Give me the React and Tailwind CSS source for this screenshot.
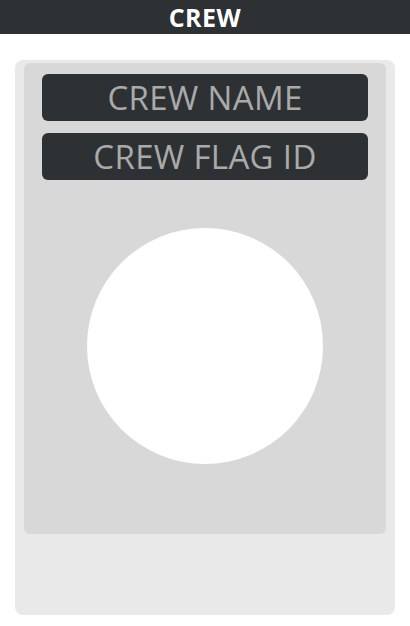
import React from 'react';

const App = () => {
  return (
    <div className="w-[410px] h-[626px] bg-white" style={{ fontFamily: '"Open Sans", sans-serif' }}>
      <div className="h-[34px] bg-[#2d3133] flex items-center justify-center">
        <h1 className="text-white text-[25px] font-bold leading-none tracking-[0.02em]">CREW</h1>
      </div>

      <div className="mx-[15px] mt-[26px] h-[555px] bg-[#e9e9e9] rounded-lg pt-[3px] px-[9px]">
        <div className="h-[471px] bg-[#d8d8d8] rounded-md px-[18px] pt-[11px] flex flex-col">
          <div className="h-[47px] bg-[#2d3133] rounded-md flex items-center justify-center">
            <span className="text-[#aaaaaa] text-[33px] leading-none tracking-[0.01em]">CREW NAME</span>
          </div>
          <div className="mt-[12px] h-[47px] bg-[#2d3133] rounded-md flex items-center justify-center">
            <span className="text-[#aaaaaa] text-[33px] leading-none tracking-[0.01em]">CREW FLAG ID</span>
          </div>
          <div className="mt-[48px] flex justify-center">
            <div className="w-[236px] h-[236px] rounded-full bg-white" />
          </div>
        </div>
      </div>
    </div>
  );
};

export default App;
